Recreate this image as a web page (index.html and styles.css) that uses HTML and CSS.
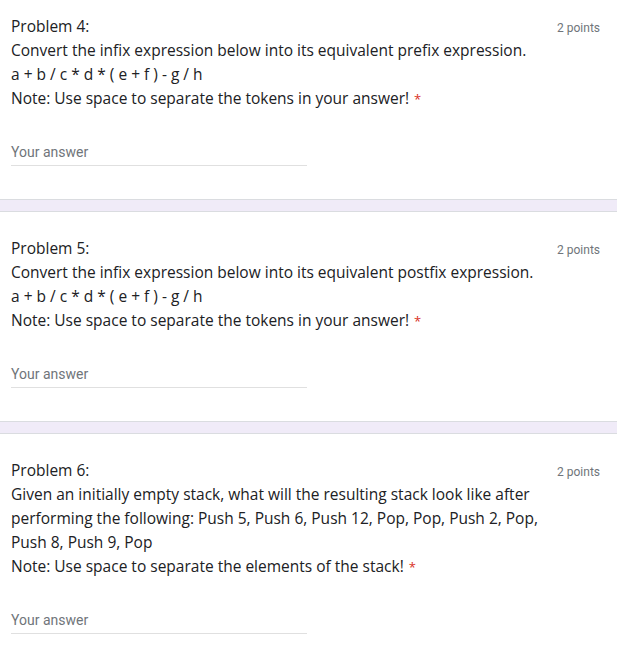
FILE: index.html
```html
<!DOCTYPE html>
<html>
<head>
<meta charset="utf-8">
<link rel="stylesheet" href="styles.css">
</head>
<body>
<div class="card first">
  <div class="head">
    <div class="title">
      <div>Problem 4:</div>
      <div>Convert the infix expression below into its equivalent prefix expression.</div>
      <div>a + b / c * d * ( e + f ) - g / h</div>
      <div>Note: Use space to separate the tokens in your answer!<span class="req">*</span></div>
    </div>
    <div class="points">2 points</div>
  </div>
  <div class="answer">Your answer</div>
</div>
<div class="band"></div>
<div class="card">
  <div class="head">
    <div class="title">
      <div>Problem 5:</div>
      <div>Convert the infix expression below into its equivalent postfix expression.</div>
      <div>a + b / c * d * ( e + f ) - g / h</div>
      <div>Note: Use space to separate the tokens in your answer!<span class="req">*</span></div>
    </div>
    <div class="points">2 points</div>
  </div>
  <div class="answer">Your answer</div>
</div>
<div class="band"></div>
<div class="card">
  <div class="head">
    <div class="title">
      <div>Problem 6:</div>
      <div>Given an initially empty stack, what will the resulting stack look like after<br>performing the following: Push 5, Push 6, Push 12, Pop, Pop, Push 2, Pop,<br>Push 8, Push 9, Pop</div>
      <div>Note: Use space to separate the elements of the stack!<span class="req">*</span></div>
    </div>
    <div class="points">2 points</div>
  </div>
  <div class="answer">Your answer</div>
</div>
</body>
</html>
```
FILE: styles.css
```css
html, body {
  margin: 0;
  padding: 0;
  background: #ffffff;
}
body {
  overflow: hidden;
}
.card {
  background: #ffffff;
  padding: 24px 17px 33px 11px;
}
.card.first {
  margin-top: -10px;
}
.head {
  display: flex;
  justify-content: space-between;
  align-items: flex-start;
}
.title {
  font-family: "Open Sans", sans-serif;
  font-size: 15.5px;
  line-height: 24px;
  color: #202124;
  white-space: nowrap;
}
.req {
  color: #d93025;
  font-size: 13px;
  line-height: 1;
  margin-left: 5px;
}
.points {
  font-family: Roboto, sans-serif;
  font-size: 12px;
  line-height: 24px;
  padding-top: 2px;
  color: #70757a;
  flex-shrink: 0;
}
.answer {
  margin-top: 32px;
  width: 296px;
  box-sizing: border-box;
  font-family: Roboto, sans-serif;
  font-size: 14px;
  line-height: 20px;
  color: #70757a;
  padding-bottom: 3px;
  border-bottom: 1px solid #e0e0e0;
}
.band {
  height: 11px;
  background: #f0ebf8;
  border-top: 1px solid #dadce0;
  border-bottom: 1px solid #dadce0;
}
```
